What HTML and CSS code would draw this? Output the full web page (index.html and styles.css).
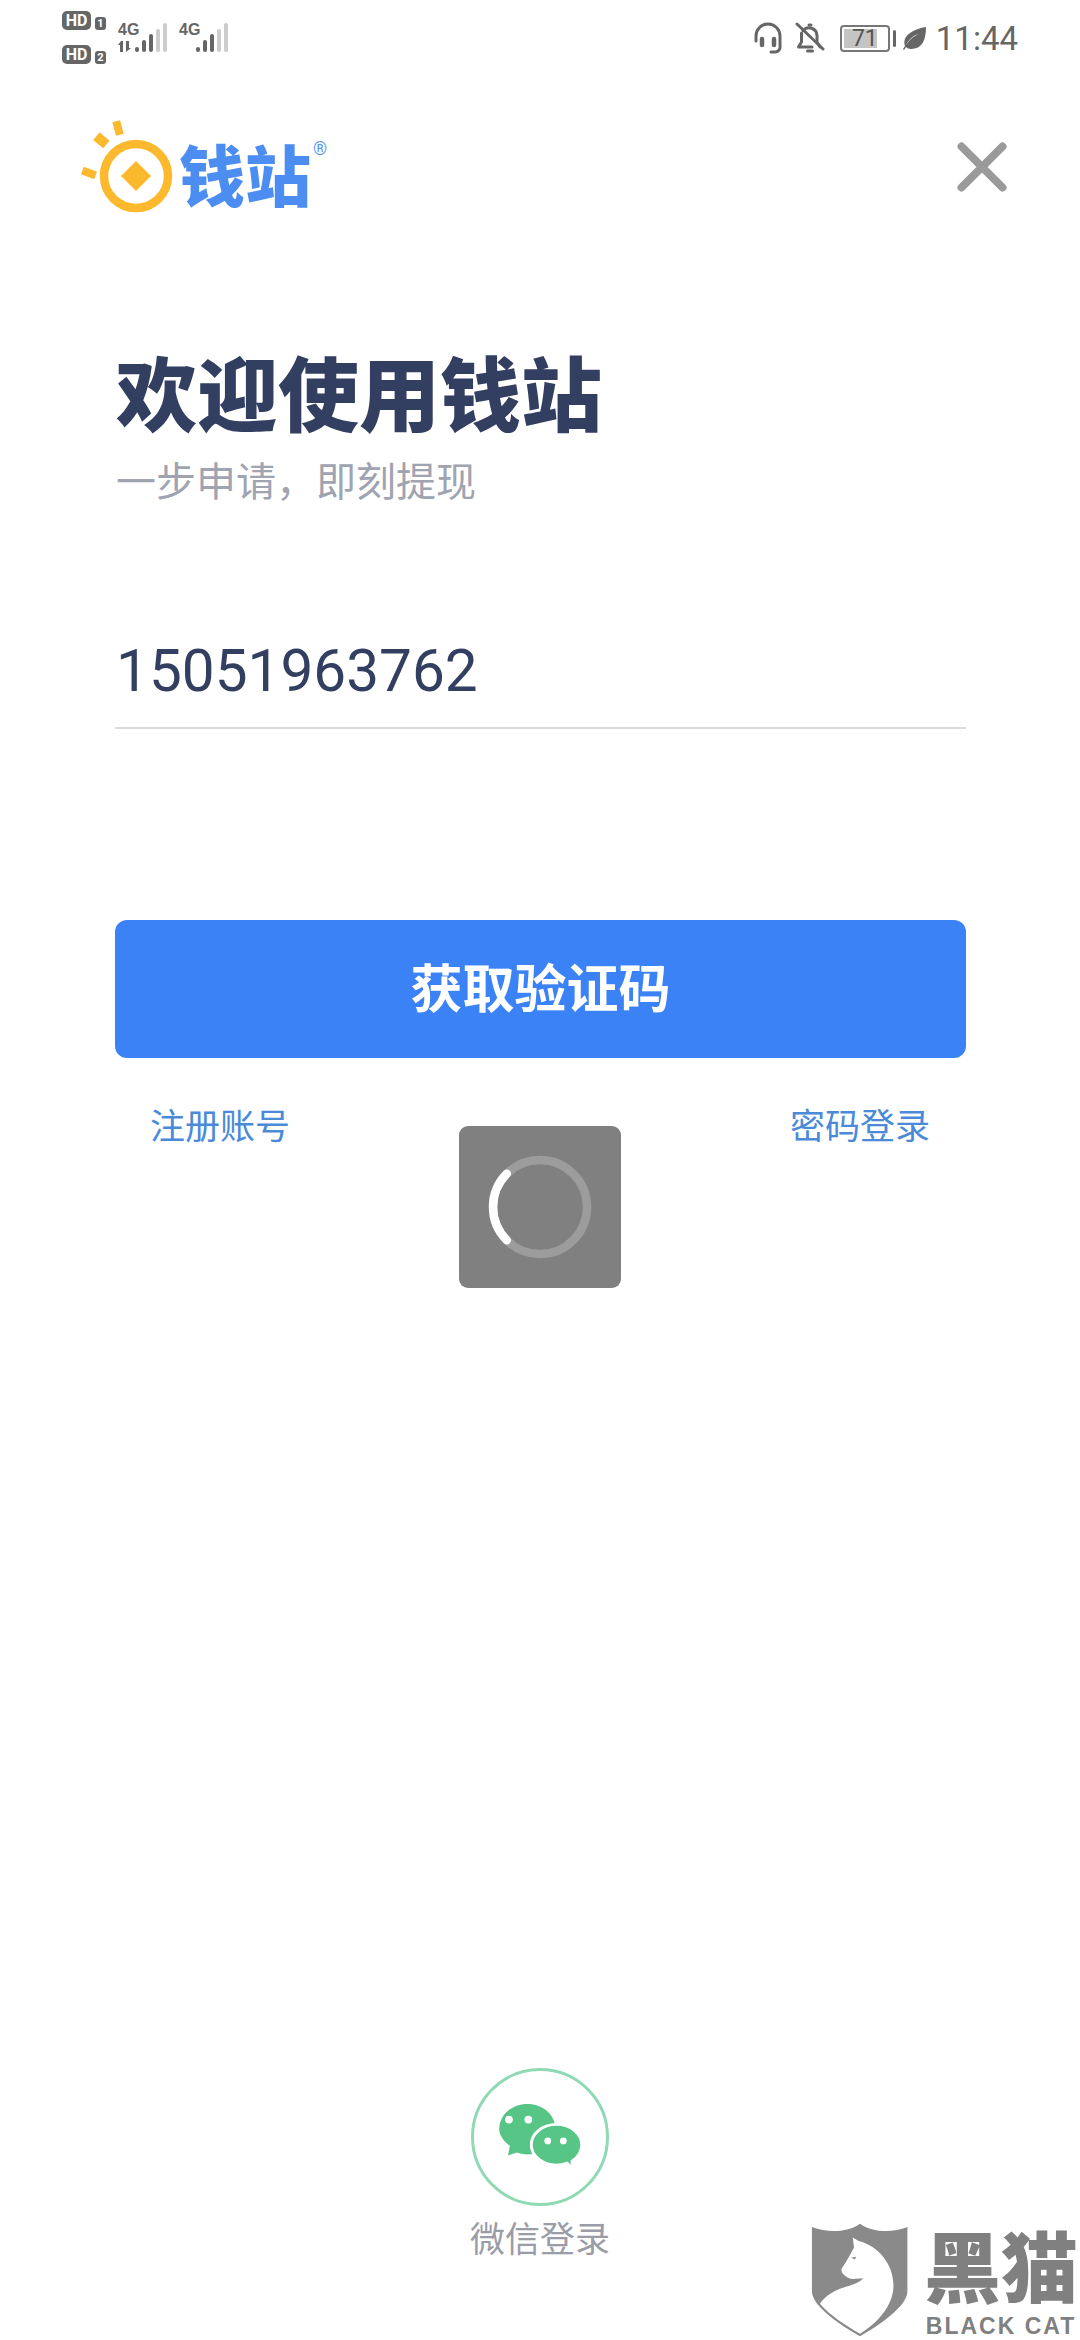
FILE: index.html
```html
<!DOCTYPE html>
<html lang="zh-CN">
<head>
    <meta charset="UTF-8">
    <meta name="viewport" content="width=device-width, initial-scale=1.0">
    <title>钱站</title>
    <link rel="stylesheet" href="styles.css">
</head>
<body>
    <div class="page">
        <div class="status-bar">
            <div class="status-left">
                <div class="hd-group">
                    <div class="hd-row"><span class="hd-tag">HD</span><span class="hd-num">1</span></div>
                    <div class="hd-row"><span class="hd-tag">HD</span><span class="hd-num">2</span></div>
                </div>
                <svg class="signal" width="49" height="34" viewBox="0 0 49 34">
                    <text x="0" y="14" class="signal-label">4G</text>
                    <path d="M3 20l-3 4h2v7h3V20zM8 20v11l5-4h-2v-7z" fill="#666"/>
                    <rect x="17" y="26" width="4" height="5" rx="2" fill="#666"/>
                    <rect x="24" y="19" width="4" height="12" rx="2" fill="#666"/>
                    <rect x="31" y="13" width="4" height="18" rx="2" fill="#666"/>
                    <rect x="38" y="8" width="4" height="23" rx="2" fill="#ccc"/>
                    <rect x="45" y="2" width="4" height="29" rx="2" fill="#ccc"/>
                </svg>
                <svg class="signal" width="49" height="34" viewBox="0 0 49 34">
                    <text x="0" y="14" class="signal-label">4G</text>
                    <rect x="17" y="26" width="4" height="5" rx="2" fill="#666"/>
                    <rect x="24" y="19" width="4" height="12" rx="2" fill="#666"/>
                    <rect x="31" y="13" width="4" height="18" rx="2" fill="#666"/>
                    <rect x="38" y="8" width="4" height="23" rx="2" fill="#ccc"/>
                    <rect x="45" y="2" width="4" height="29" rx="2" fill="#ccc"/>
                </svg>
            </div>
            <div class="status-right">
                <svg width="30" height="32" viewBox="0 0 30 32" fill="none" stroke="#666" stroke-width="3" stroke-linecap="round">
                    <path d="M3 19v-5a12 12 0 0 1 24 0v10a5 5 0 0 1-5 6h-4"/>
                    <path d="M9 17v6M21 17v6" stroke-width="4.5"/>
                </svg>
                <svg width="30" height="32" viewBox="0 0 30 32" fill="none" stroke="#666" stroke-width="3" stroke-linecap="round" stroke-linejoin="round">
                    <path d="M8 8.500a8 8 0 0 1 14 5V20l3 5M17 25H3.500l3-5v-9"/>
                    <path d="M12.500 29h5M14 3h2M2 2l26 25"/>
                </svg>
                <div class="battery">
                    <div class="battery-body"><span class="battery-fill"></span><span class="battery-text">71</span></div>
                    <span class="battery-nub"></span>
                </div>
                <svg width="24" height="24" viewBox="0 0 24 24">
                    <path d="M23 1C23 14 19 23 8 23 6 23 4 22 3 21L1 24 0 23 2 20C-1 12 6 4 23 1zM3 19C7 13 11 10 16 8 11 9 6 13 3 19z" fill="#666" fill-rule="evenodd"/>
                </svg>
                <span class="clock">11:44</span>
            </div>
        </div>

        <div class="top-row">
            <svg class="logo" width="270" height="100" viewBox="0 0 270 100">
                <circle cx="76" cy="58" r="32" fill="none" stroke="#fdb92e" stroke-width="8.500"/>
                <path d="M76 43l15 15-15 15-15-15z" fill="#fdb92e"/>
                <rect x="22" y="51" width="14" height="8" transform="rotate(20 29 55)" fill="#fdb92e"/>
                <rect x="35" y="17" width="13" height="10" transform="rotate(40 41 22)" fill="#fdb92e"/>
                <rect x="54" y="3" width="8" height="14" transform="rotate(-15 58 10)" fill="#fdb92e"/>
                <text x="119" y="83" class="logo-name">钱站</text>
                <text x="253" y="37" class="logo-mark">®</text>
            </svg>
            <svg class="close" width="50" height="50" viewBox="0 0 50 50">
                <path d="M4.500 4.500l41 41M45.500 4.500l-41 41" stroke="#9a9a9a" stroke-width="8" stroke-linecap="round"/>
            </svg>
        </div>

        <h1>欢迎使用钱站</h1>
        <p class="sub">一步申请，即刻提现</p>

        <div class="phone">15051963762</div>

        <button class="submit">获取验证码</button>

        <div class="links">
            <a href="#">注册账号</a>
            <a href="#">密码登录</a>
        </div>

        <div class="wechat">
            <div class="wechat-circle">
                <svg width="136" height="136" viewBox="0 0 136 136">
                    <path d="M35 87l2-10C30 72 26 66 26 60c0-15 13-26 29-26s29 11 29 26-13 26-29 26c-4 0-8-1-11-2z" fill="#57c586"/>
                    <path d="M101 101l-5-6c-3 1-7 2-11 2-15 0-26-10-26-21s11-21 26-21 26 10 26 21c0 7-4 13-10 17z" fill="#57c586" stroke="#fff" stroke-width="3"/>
                    <circle cx="36" cy="50" r="4" fill="#fff"/>
                    <circle cx="56" cy="50" r="4" fill="#fff"/>
                    <circle cx="76" cy="72" r="3.500" fill="#fff"/>
                    <circle cx="92" cy="72" r="3.500" fill="#fff"/>
                </svg>
            </div>
            <span class="wechat-label">微信登录</span>
        </div>

        <div class="toast">
            <svg width="162" height="162" viewBox="0 0 162 162" fill="none" stroke-width="8.500">
                <circle cx="81" cy="81" r="47" stroke="#9c9c9c"/>
                <path d="M47.800 47.800A47 47 0 0 0 47.800 114.200" stroke="#fff" stroke-linecap="round"/>
            </svg>
        </div>

        <div class="watermark">
            <svg class="shield" width="100" height="116" viewBox="60 40 300 350">
                <path d="M65 55c50 20 110 15 145-10 35 25 95 30 143 10v195c0 45-90 105-143 135C157 355 65 295 65 250z" fill="#8a8a8a"/>
                <path d="M188 87l18 10c60 15 105 70 105 135 0 60-50 115-101 145-45-25-90-55-121-90 15-25 50-45 90-55 20-5 35-15 40-22l-30 2c-10 0-20-5-30-15-5-5-5-10-5-15 10-15 25-40 38-65z" fill="#fff"/>
                <path d="M183 148l15-3-3 8z" fill="#8a8a8a"/>
            </svg>
            <div class="watermark-text">
                <span class="watermark-cn">黑猫</span>
                <span class="watermark-en">BLACK CAT</span>
            </div>
        </div>
    </div>
</body>
</html>
```

FILE: styles.css
```css
* {
    box-sizing: border-box;
}
body {
    margin: 0;
    background-color: #fff;
    font-family: Roboto, "Noto Sans CJK SC", sans-serif;
    color: #333f60;
}
.page {
    position: relative;
    display: flex;
    flex-direction: column;
    width: 1080px;
    height: 2340px;
    overflow: hidden;
}

/* status bar */
.status-bar {
    display: flex;
    justify-content: space-between;
    align-items: flex-start;
    height: 118px;
    padding: 11px 62px 0;
}
.status-left {
    display: flex;
    gap: 12px;
}
.hd-group {
    display: flex;
    flex-direction: column;
    gap: 15px;
}
.hd-row {
    display: flex;
    align-items: flex-end;
    gap: 4px;
}
.hd-tag {
    width: 29px;
    height: 19px;
    border-radius: 5px;
    background-color: #666;
    color: #fff;
    font-size: 16px;
    font-weight: 700;
    line-height: 19px;
    text-align: center;
}
.hd-num {
    width: 11px;
    height: 13px;
    border-radius: 3px;
    background-color: #666;
    color: #fff;
    font-size: 11px;
    font-weight: 700;
    line-height: 13px;
    text-align: center;
}
.signal {
    margin-top: 10px;
}
.signal-label {
    font-family: "Liberation Sans", sans-serif;
    font-size: 16px;
    font-weight: 700;
    fill: #666;
}
.status-right {
    display: flex;
    align-items: center;
    gap: 12px;
    height: 32px;
    margin-top: 11px;
}
.battery {
    display: flex;
    align-items: center;
    gap: 3px;
    margin: 0 -5px 0 3px;
}
.battery-body {
    position: relative;
    width: 50px;
    height: 27px;
    border: 2px solid #777;
    border-radius: 4px;
    font-size: 23px;
    line-height: 23px;
    text-align: center;
    color: #555;
}
.battery-fill {
    position: absolute;
    left: 2px;
    top: 2px;
    width: 33px;
    height: 19px;
    background-color: #c4c4c4;
}
.battery-text {
    position: relative;
}
.battery-nub {
    width: 3px;
    height: 17px;
    border-radius: 2px;
    background-color: #666;
}
.clock {
    margin-left: -3px;
    font-size: 33px;
    color: #666;
}

/* header */
.top-row {
    display: flex;
    justify-content: space-between;
    align-items: flex-start;
    height: 233px;
    padding: 0 73px 0 60px;
}
.logo {
    overflow: visible;
}
.close {
    margin-top: 24px;
}
.logo-name {
    font-family: "Noto Sans CJK SC", sans-serif;
    font-size: 66px;
    font-weight: 900;
    fill: #4b8df0;
}
.logo-mark {
    font-size: 18px;
    fill: #5d9af0;
}

h1 {
    margin: 0 0 0 116px;
    font-size: 81px;
    font-weight: 900;
    line-height: 94px;
}
.sub {
    margin: 9px 0 0 116px;
    font-size: 40px;
    line-height: 58px;
    color: #a0a3b0;
}
.phone {
    width: 851px;
    margin: 119px 0 0 115px;
    padding: 0 0 16px 1px;
    border-bottom: 2px solid #dcdcdc;
    font-size: 58.500px;
    line-height: 80px;
}
.submit {
    display: block;
    width: 851px;
    height: 138px;
    margin: 191px 0 0 115px;
    padding: 0 0 8px;
    border: none;
    border-radius: 12px;
    background-color: #3b82f6;
    color: #fff;
    font-family: Roboto, "Noto Sans CJK SC", sans-serif;
    font-size: 52px;
    font-weight: 700;
}
.links {
    display: flex;
    justify-content: space-between;
    margin-top: 45px;
    padding: 0 150px;
}
.links a {
    font-size: 35px;
    line-height: 50px;
    color: #4a8ad8;
    text-decoration: none;
}

/* wechat login */
.wechat {
    display: flex;
    flex-direction: column;
    align-items: center;
    margin-top: auto;
    padding-bottom: 74px;
}
.wechat-circle {
    width: 138px;
    height: 138px;
    border: 3px solid #8fd9b5;
    border-radius: 50%;
    display: flex;
    align-items: center;
    justify-content: center;
}
.wechat-label {
    margin-top: 10px;
    font-size: 35px;
    line-height: 50px;
    color: #9a9ca8;
}

/* loading toast, sits on top of the form */
.toast {
    position: absolute;
    left: 459px;
    top: 1126px;
    width: 162px;
    height: 162px;
    border-radius: 9px;
    background-color: #808080;
}

/* corner watermark */
.watermark {
    position: absolute;
    right: 0;
    bottom: 0;
    display: flex;
    align-items: flex-start;
    gap: 14px;
    width: 270px;
    height: 118px;
    font-family: "Liberation Sans", "Noto Sans CJK SC", sans-serif;
    color: #808080;
}
.shield {
    flex-shrink: 0;
}
.watermark-text {
    display: flex;
    flex-direction: column;
    align-items: center;
    margin-top: 12px;
}
.watermark-cn {
    font-size: 77px;
    font-weight: 900;
    line-height: 72px;
    white-space: nowrap;
}
.watermark-en {
    margin-top: 7px;
    font-size: 23px;
    font-weight: 700;
    letter-spacing: 2px;
    line-height: 26px;
    white-space: nowrap;
}
```
